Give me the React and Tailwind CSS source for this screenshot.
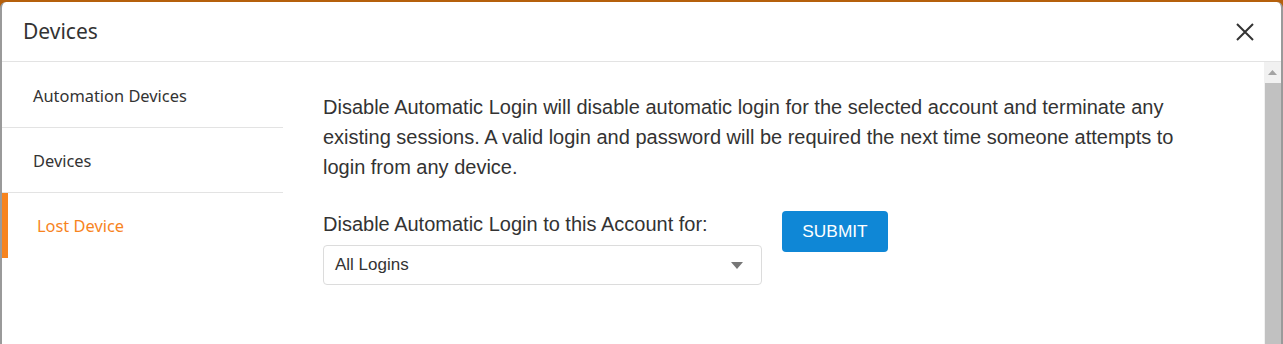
import React from 'react';

const navItems = [
  { label: 'Automation Devices', active: false },
  { label: 'Devices', active: false },
  { label: 'Lost Device', active: true },
];

export default function App() {
  return (
    <div className="h-[344px] w-full overflow-hidden bg-[#b5600c] pt-[2px]">
      <div className="flex h-full flex-col rounded-t-[6px] border-x-2 border-[#9a9a9a] bg-white">
        <div className="flex h-[60px] shrink-0 items-center justify-between border-b border-[#e3e3e3] pl-[21px] pr-[26px]">
          <h2 className="text-[21px] text-[#333] font-['Noto_Sans',sans-serif]">Devices</h2>
          <svg width="20" height="20" viewBox="0 0 20 20" className="text-[#333]">
            <path d="M2 2 L18 18 M18 2 L2 18" stroke="currentColor" strokeWidth="2" fill="none" />
          </svg>
        </div>
        <div className="flex min-h-0 flex-1">
          <div className="w-[281px] shrink-0 pt-[1px] font-['Noto_Sans',sans-serif] text-[16.4px]">
            {navItems.map((item, i) => (
              <div
                key={item.label}
                className={`flex h-[65px] items-center pt-[2px] ${i < navItems.length - 1 ? 'border-b border-[#e3e3e3]' : ''} ${
                  item.active ? 'border-l-[6px] border-l-[#f7841e] pl-[29px] text-[#f7841e]' : 'pl-[31px] text-[#333]'
                }`}
              >
                {item.label}
              </div>
            ))}
          </div>
          <div className="flex-1 pl-[40px] pt-[30px] font-['Liberation_Sans',Arial,sans-serif] text-[#333]">
            <p className="max-w-[870px] text-[20px] leading-[30px]">
              Disable Automatic Login will disable automatic login for the selected account and terminate any existing
              sessions. A valid login and password will be required the next time someone attempts to login from any
              device.
            </p>
            <div className="mt-[31px] flex items-start gap-[20px]">
              <div className="w-[439px]">
                <label className="block text-[20px] leading-[22px]">Disable Automatic Login to this Account for:</label>
                <div className="mt-[10px] flex h-[40px] items-center justify-between rounded-[4px] border border-[#dcdcdc] pl-[11px] pr-[18px] text-[17px]">
                  <span>All Logins</span>
                  <svg width="12" height="7" viewBox="0 0 12 7">
                    <path d="M0 0 L12 0 L6 7 Z" fill="#777" />
                  </svg>
                </div>
              </div>
              <button className="-mt-[2px] h-[41px] w-[106px] rounded-[4px] bg-[#0f87d6] text-[17.3px] text-white">
                SUBMIT
              </button>
            </div>
          </div>
          <div className="flex w-[17px] shrink-0 flex-col bg-[#f1f1f1]">
            <div className="flex h-[21px] items-center justify-center">
              <svg width="9" height="5" viewBox="0 0 9 5">
                <path d="M0 5 L4.5 0 L9 5 Z" fill="#a3a3a3" />
              </svg>
            </div>
            <div className="ml-[1px] flex-1 bg-[#c1c1c1]" />
          </div>
        </div>
      </div>
    </div>
  );
}
